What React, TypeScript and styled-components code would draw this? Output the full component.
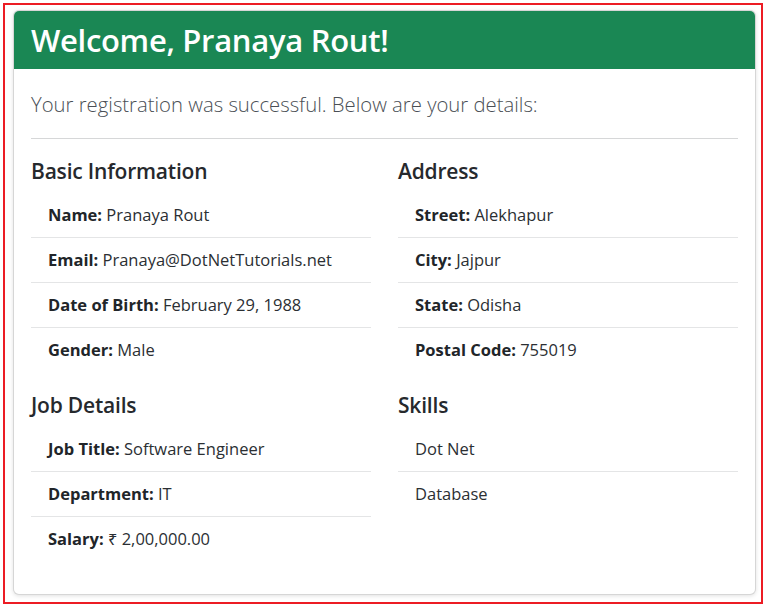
import React from 'react'
import styled, { createGlobalStyle } from 'styled-components'

interface Field {
  label?: string;
  value: string;
}

interface Section {
  title: string;
  items: Field[];
}

const sections: Section[] = [
  {
    title: 'Basic Information',
    items: [
      { label: 'Name', value: 'Pranaya Rout' },
      { label: 'Email', value: 'Pranaya@DotNetTutorials.net' },
      { label: 'Date of Birth', value: 'February 29, 1988' },
      { label: 'Gender', value: 'Male' },
    ],
  },
  {
    title: 'Address',
    items: [
      { label: 'Street', value: 'Alekhapur' },
      { label: 'City', value: 'Jajpur' },
      { label: 'State', value: 'Odisha' },
      { label: 'Postal Code', value: '755019' },
    ],
  },
  {
    title: 'Job Details',
    items: [
      { label: 'Job Title', value: 'Software Engineer' },
      { label: 'Department', value: 'IT' },
      { label: 'Salary', value: '₹ 2,00,000.00' },
    ],
  },
  {
    title: 'Skills',
    items: [{ value: 'Dot Net' }, { value: 'Database' }],
  },
]

const GlobalStyle = createGlobalStyle`
  html, body {
    margin: 0;
    background: #fff;
  }
  body {
    font-family: "Open Sans", "Noto Sans", sans-serif;
    color: #212529;
  }
`

const App: React.FC = () => {
  return (
    <>
      <GlobalStyle />
      <Frame>
        <Card>
          <CardHeader>
            <h2>Welcome, Pranaya Rout!</h2>
          </CardHeader>
          <CardBody>
            <Lead>Your registration was successful. Below are your details:</Lead>
            <Divider />
            <DetailsGrid>
              {sections.map((section) => (
                <div key={section.title}>
                  <SectionTitle>{section.title}</SectionTitle>
                  <ItemList>
                    {section.items.map((item) => (
                      <Item key={item.value}>
                        {item.label && <strong>{item.label}:</strong>}
                        {item.label ? ' ' : ''}
                        {item.value}
                      </Item>
                    ))}
                  </ItemList>
                </div>
              ))}
            </DetailsGrid>
          </CardBody>
        </Card>
      </Frame>
    </>
  )
}

const Frame = styled.div`
  box-sizing: border-box;
  margin: 3px;
  width: 760px;
  height: 601px;
  border: 2px solid #ec1c24;
  padding: 5px 5px 8px 8px;
`

const Card = styled.div`
  border: 1px solid rgba(0, 0, 0, 0.16);
  border-radius: 6px;
  box-shadow: 0 1px 4px rgba(0, 0, 0, 0.12);
  overflow: hidden;
  background: #fff;
`

const CardHeader = styled.div`
  background: #1a8754;
  color: #fff;
  padding: 11px 17px 10px;

  > h2 {
    margin: 0;
    font-size: 31px;
    font-weight: 600;
    line-height: 37px;
    letter-spacing: -0.3px;
  }
`

const CardBody = styled.div`
  padding: 20px 17px 33px;
`

const Lead = styled.p`
  margin: 0 0 19px;
  font-size: 20.3px;
  font-weight: 300;
  line-height: 30px;
  color: #4a4f55;
`

const Divider = styled.hr`
  border: none;
  height: 1px;
  background: #d6d7d8;
  margin: 0 0 19px;
`

const DetailsGrid = styled.div`
  display: grid;
  grid-template-columns: 1fr 1fr;
  column-gap: 27px;
  row-gap: 20px;
`

const SectionTitle = styled.h4`
  margin: 0 0 9px;
  font-size: 21px;
  font-weight: 600;
  line-height: 26px;
  letter-spacing: -0.2px;
  color: #26292d;
`

const ItemList = styled.ul`
  list-style: none;
  margin: 0;
  padding: 0;
`

const Item = styled.li`
  padding: 10px 17px;
  font-size: 16.5px;
  line-height: 24px;
  color: #2b2f33;
  border-bottom: 1px solid #e4e5e6;

  &:last-child {
    border-bottom: none;
  }

  strong {
    font-weight: 700;
    color: #212529;
  }
`

export default App
